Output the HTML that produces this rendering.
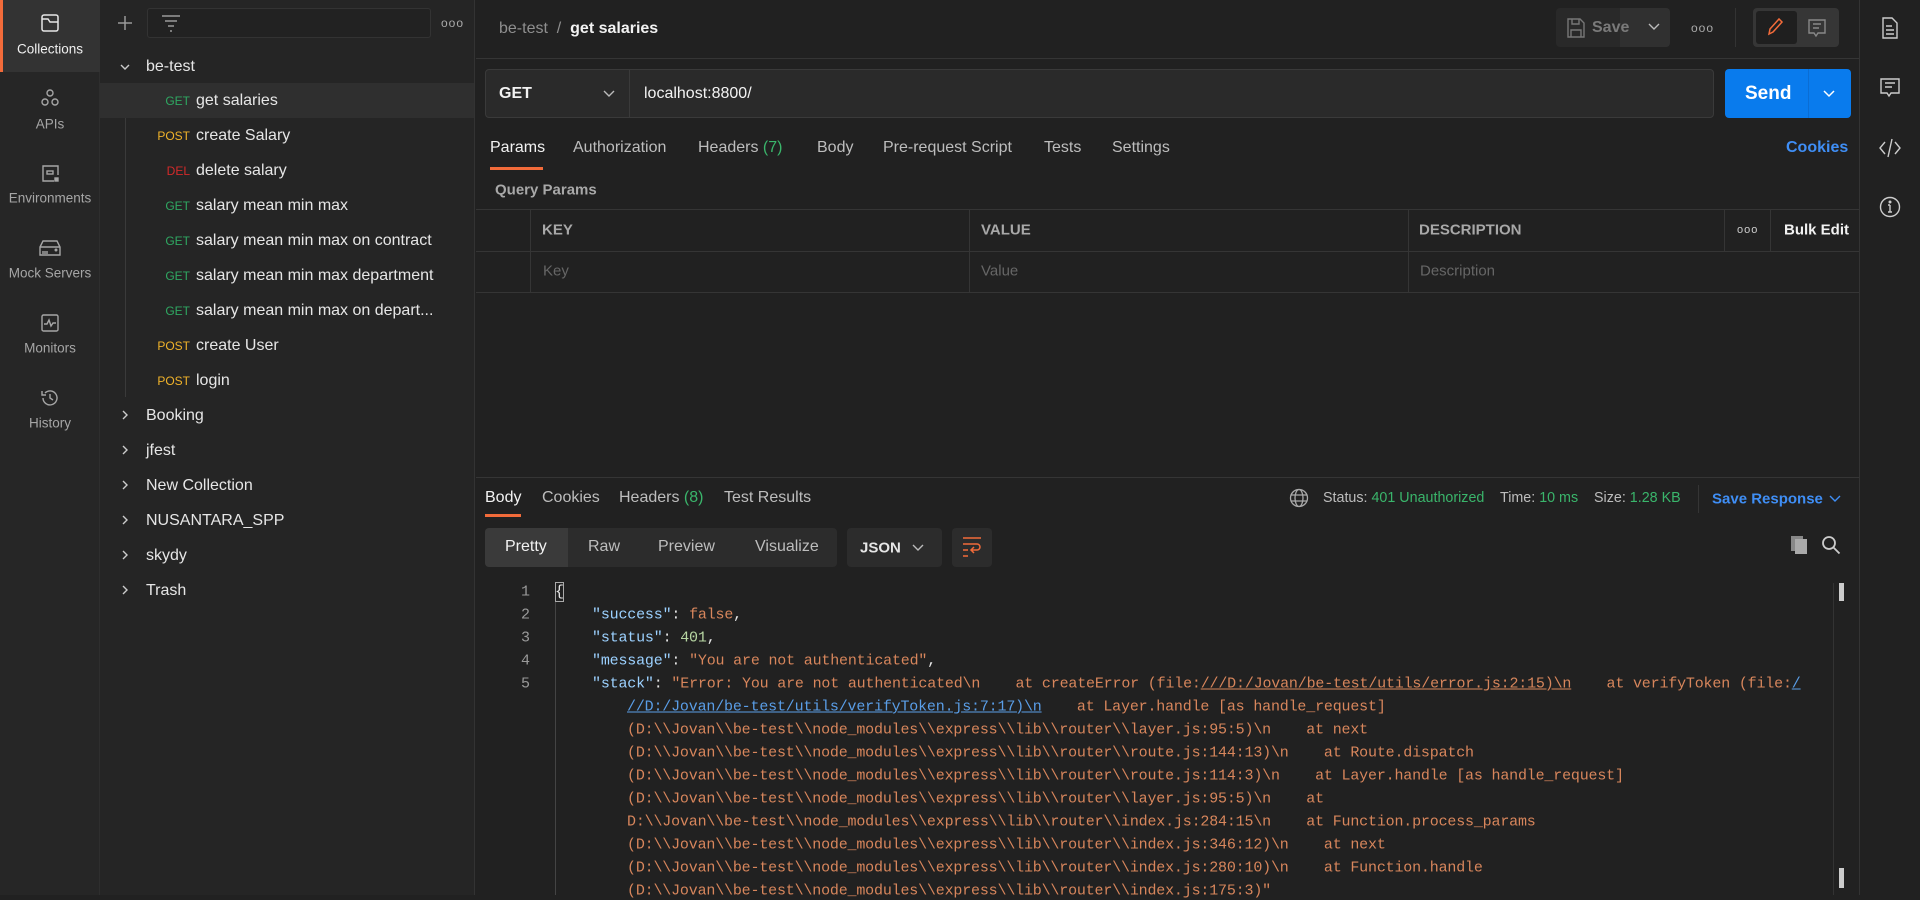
<!DOCTYPE html>
<html><head><meta charset="utf-8"><style>
*{margin:0;padding:0;box-sizing:border-box}
body{width:1920px;height:895px;overflow:hidden;background:#212121;font-family:"Liberation Sans",sans-serif;color:#e6e6e6;position:relative}
.a{position:absolute;white-space:pre}
.c{transform:translateY(-50%)}
.rail{position:absolute;left:0;top:0;width:100px;height:895px;background:#262626;border-right:1px solid #2e2e2e}
.side{position:absolute;left:100px;top:0;width:375px;height:895px;background:#252525;border-right:1px solid #333}
.rl{position:absolute;width:100px;text-align:center;font-size:13.5px;color:#a6a6a6}
.m{position:absolute;right:0;font-size:12px}
.row{position:absolute;left:0;width:374px;height:35px;font-size:16px;color:#e6e6e6}
.row .n{position:absolute;left:96px;top:50%;transform:translateY(-50%)}
.row .m{left:0;width:90px;text-align:right;top:50%;transform:translateY(-50%)}
.col{position:absolute;left:0;width:374px;height:35px;font-size:16px}
.col span{position:absolute;left:46px;top:50%;transform:translateY(-50%)}
.col svg{position:absolute;left:19px;top:11px}
.code{font-family:"Liberation Mono",monospace;font-size:15px;letter-spacing:-0.18px;color:#d8865c}
.k{color:#9cd1ff}.p{color:#e6e6e6}.g{color:#b8d7a3}
.u{text-decoration:underline}.b{color:#5a9ee8;text-decoration:underline}
.ln{position:absolute;left:500px;width:30px;text-align:right;font-family:"Liberation Mono",monospace;font-size:15px;color:#9a9a9a}
.tab{position:absolute;font-size:16px;color:#bdbdbd}
.hline{position:absolute;height:1px;background:#353535}
.vline{position:absolute;width:1px;background:#353535}
</style></head><body>

<div class="rail">
 <div style="position:absolute;left:0;top:0;width:100px;height:72px;background:#333"></div>
 <div style="position:absolute;left:0;top:0;width:3px;height:72px;background:#f26b3a"></div>
 <svg class="a" style="left:41px;top:14px" width="18" height="18" viewBox="0 0 18 18" fill="none" stroke="#e6e6e6" stroke-width="1.5"><rect x="1" y="1" width="16" height="16" rx="2"/><path d="M1 5h6l2 3h8"/></svg>
 <div class="rl c" style="top:49px;color:#f0f0f0">Collections</div>
 <svg class="a" style="left:40px;top:89px" width="20" height="18" viewBox="0 0 20 18" fill="none" stroke="#a6a6a6" stroke-width="1.4"><circle cx="10" cy="4" r="3"/><circle cx="5" cy="13" r="3"/><circle cx="15" cy="13" r="3"/></svg>
 <div class="rl c" style="top:124px">APIs</div>
 <svg class="a" style="left:41px;top:164px" width="19" height="19" viewBox="0 0 19 19" fill="none" stroke="#a6a6a6" stroke-width="1.4"><path d="M17 11V2H2v15h11"/><rect x="6" y="7" width="6" height="3"/><rect x="14" y="14" width="3" height="3" fill="#a6a6a6"/></svg>
 <div class="rl c" style="top:198px">Environments</div>
 <svg class="a" style="left:39px;top:240px" width="22" height="16" viewBox="0 0 22 16" fill="none" stroke="#a6a6a6" stroke-width="1.4"><path d="M1 7l3-6h14l3 6v8H1z M1 7h20"/><path d="M4 11v3M6 11v3M8 11v3"/><circle cx="17" cy="10" r="0.8" fill="#a6a6a6"/></svg>
 <div class="rl c" style="top:273px">Mock Servers</div>
 <svg class="a" style="left:41px;top:314px" width="18" height="18" viewBox="0 0 18 18" fill="none" stroke="#a6a6a6" stroke-width="1.4"><rect x="1" y="1" width="16" height="16" rx="1.5"/><path d="M3 10h3l2-4 2 6 2-3h3"/></svg>
 <div class="rl c" style="top:348px">Monitors</div>
 <svg class="a" style="left:40px;top:388px" width="20" height="20" viewBox="0 0 20 20" fill="none" stroke="#a6a6a6" stroke-width="1.4"><path d="M3 10a7 7 0 1 0 2-5M2 3v4h4"/><path d="M10 6v4l3 2"/></svg>
 <div class="rl c" style="top:423px">History</div>
</div>

<div class="side">
 <svg class="a" style="left:17px;top:15px" width="16" height="16" viewBox="0 0 16 16" stroke="#9a9a9a" stroke-width="1.5"><path d="M8 1v14M1 8h14"/></svg>
 <div style="position:absolute;left:47px;top:8px;width:284px;height:30px;border:1px solid #333;border-radius:3px;background:#222"></div>
 <svg class="a" style="left:61px;top:14px" width="20" height="18" viewBox="0 0 20 18" stroke="#9a9a9a" stroke-width="1.4"><path d="M1 2h18M4 7h12M7 12h6M9 17h2"/></svg>
 <div class="a c" style="left:341px;top:23px;font-size:12px;color:#aaa;letter-spacing:1px">ooo</div>
 <div class="col" style="top:49px"><svg width="12" height="12" viewBox="0 0 12 12" fill="none" stroke="#ccc" stroke-width="1.4" style="top:12px"><path d="M2 4l4 4 4-4"/></svg><span>be-test</span></div>
 <div style="position:absolute;left:25px;top:83px;width:1px;height:314px;background:#3a3a3a"></div>
 <div class="row" style="top:83px;background:#2f2f2f"><span class="m" style="color:#2fa862">GET</span><span class="n">get salaries</span></div>
 <div class="row" style="top:118px"><span class="m" style="color:#f1b32a">POST</span><span class="n">create Salary</span></div>
 <div class="row" style="top:153px"><span class="m" style="color:#d32a2a">DEL</span><span class="n">delete salary</span></div>
 <div class="row" style="top:188px"><span class="m" style="color:#2fa862">GET</span><span class="n">salary mean min max</span></div>
 <div class="row" style="top:223px"><span class="m" style="color:#2fa862">GET</span><span class="n">salary mean min max on contract</span></div>
 <div class="row" style="top:258px"><span class="m" style="color:#2fa862">GET</span><span class="n">salary mean min max department</span></div>
 <div class="row" style="top:293px"><span class="m" style="color:#2fa862">GET</span><span class="n">salary mean min max on depart...</span></div>
 <div class="row" style="top:328px"><span class="m" style="color:#f1b32a">POST</span><span class="n">create User</span></div>
 <div class="row" style="top:363px"><span class="m" style="color:#f1b32a">POST</span><span class="n">login</span></div>
 <div class="col" style="top:398px"><svg width="12" height="12" viewBox="0 0 12 12" fill="none" stroke="#ccc" stroke-width="1.4"><path d="M4 2l4 4-4 4"/></svg><span>Booking</span></div>
 <div class="col" style="top:433px"><svg width="12" height="12" viewBox="0 0 12 12" fill="none" stroke="#ccc" stroke-width="1.4"><path d="M4 2l4 4-4 4"/></svg><span>jfest</span></div>
 <div class="col" style="top:468px"><svg width="12" height="12" viewBox="0 0 12 12" fill="none" stroke="#ccc" stroke-width="1.4"><path d="M4 2l4 4-4 4"/></svg><span>New Collection</span></div>
 <div class="col" style="top:503px"><svg width="12" height="12" viewBox="0 0 12 12" fill="none" stroke="#ccc" stroke-width="1.4"><path d="M4 2l4 4-4 4"/></svg><span>NUSANTARA_SPP</span></div>
 <div class="col" style="top:538px"><svg width="12" height="12" viewBox="0 0 12 12" fill="none" stroke="#ccc" stroke-width="1.4"><path d="M4 2l4 4-4 4"/></svg><span>skydy</span></div>
 <div class="col" style="top:573px"><svg width="12" height="12" viewBox="0 0 12 12" fill="none" stroke="#ccc" stroke-width="1.4"><path d="M4 2l4 4-4 4"/></svg><span>Trash</span></div>
</div>

<div class="a c" style="left:499px;top:29px;font-size:16px;color:#8f8f8f">be-test  /  <span style="color:#f2f2f2;font-weight:bold">get salaries</span></div>
<div class="hline" style="left:476px;top:58px;width:1383px"></div>
<div style="position:absolute;left:1556px;top:8px;width:114px;height:39px;background:#292929;border-radius:4px"></div>
<div style="position:absolute;left:1620px;top:8px;width:50px;height:39px;background:#303030;border-radius:0 4px 4px 0"></div>
<svg class="a" style="left:1567px;top:18px" width="18" height="20" viewBox="0 0 18 20" fill="none" stroke="#777" stroke-width="1.4"><path d="M1 1h12l4 4v14H1z"/><path d="M5 1v5h7V1M4 19v-7h10v7"/></svg>
<div class="a c" style="left:1592px;top:28px;font-size:16px;color:#7a7a7a;font-weight:bold">Save</div>
<svg class="a" style="left:1648px;top:22px" width="12" height="10" viewBox="0 0 12 10" fill="none" stroke="#bbb" stroke-width="1.4"><path d="M1 2l5 5 5-5"/></svg>
<div class="a c" style="left:1691px;top:28px;font-size:12px;color:#aaa;letter-spacing:1px">ooo</div>
<div class="vline" style="left:1735px;top:8px;height:39px;background:#333"></div>
<div style="position:absolute;left:1753px;top:8px;width:86px;height:39px;background:#363636;border-radius:4px"></div>
<div style="position:absolute;left:1756px;top:11px;width:41px;height:33px;background:#1f1f1f;border-radius:3px"></div>
<svg class="a" style="left:1766px;top:17px" width="20" height="20" viewBox="0 0 20 20" fill="none" stroke="#f26b3a" stroke-width="1.5"><path d="M3 17l1-5 9-10 3 3-9 10z"/></svg>
<svg class="a" style="left:1807px;top:18px" width="20" height="20" viewBox="0 0 20 20" fill="none" stroke="#888" stroke-width="1.4"><path d="M2 2h16v13h-7l-2 3-2-3H2z M6 6h8M6 10h6"/></svg>

<div style="position:absolute;left:485px;top:69px;width:1229px;height:49px;background:#2a2a2a;border:1px solid #3a3a3a;border-radius:4px"></div>
<div class="vline" style="left:629px;top:70px;height:47px;background:#3a3a3a"></div>
<div class="a c" style="left:499px;top:94px;font-size:16px;font-weight:bold;color:#f2f2f2">GET</div>
<svg class="a" style="left:603px;top:89px" width="12" height="10" viewBox="0 0 12 10" fill="none" stroke="#bbb" stroke-width="1.4"><path d="M1 2l5 5 5-5"/></svg>
<div class="a c" style="left:644px;top:94px;font-size:16px;color:#f2f2f2">localhost:8800/</div>
<div style="position:absolute;left:1725px;top:69px;width:126px;height:49px;background:#097bed;border-radius:4px"></div>
<div class="vline" style="left:1808px;top:69px;height:49px;background:#0a6dd4"></div>
<div class="a c" style="left:1745px;top:94px;font-size:19px;font-weight:bold;color:#fff">Send</div>
<svg class="a" style="left:1823px;top:89px" width="12" height="10" viewBox="0 0 12 10" fill="none" stroke="#fff" stroke-width="1.5"><path d="M1 2l5 5 5-5"/></svg>

<div class="tab c" style="left:490px;top:148px;color:#f2f2f2">Params</div>
<div style="position:absolute;left:490px;top:167px;width:53px;height:3px;background:#f26b3a"></div>
<div class="tab c" style="left:573px;top:148px">Authorization</div>
<div class="tab c" style="left:698px;top:148px">Headers <span style="color:#3ab56b">(7)</span></div>
<div class="tab c" style="left:817px;top:148px">Body</div>
<div class="tab c" style="left:883px;top:148px">Pre-request Script</div>
<div class="tab c" style="left:1044px;top:148px">Tests</div>
<div class="tab c" style="left:1112px;top:148px">Settings</div>
<div class="a c" style="left:1786px;top:148px;font-size:16px;font-weight:bold;color:#3f8ef5">Cookies</div>
<div class="a c" style="left:495px;top:190px;font-size:15px;font-weight:bold;color:#a8a8a8">Query Params</div>

<div class="hline" style="left:476px;top:209px;width:1383px"></div>
<div class="hline" style="left:476px;top:251px;width:1383px"></div>
<div class="hline" style="left:476px;top:292px;width:1383px"></div>
<div class="vline" style="left:530px;top:210px;height:82px"></div>
<div class="vline" style="left:969px;top:210px;height:82px"></div>
<div class="vline" style="left:1408px;top:210px;height:82px"></div>
<div class="vline" style="left:1724px;top:210px;height:41px"></div>
<div class="vline" style="left:1770px;top:210px;height:41px"></div>
<div class="a c" style="left:542px;top:230px;font-size:15px;font-weight:bold;color:#a8a8a8">KEY</div>
<div class="a c" style="left:981px;top:230px;font-size:15px;font-weight:bold;color:#a8a8a8">VALUE</div>
<div class="a c" style="left:1419px;top:230px;font-size:15px;font-weight:bold;color:#a8a8a8">DESCRIPTION</div>
<div class="a c" style="left:1737px;top:230px;font-size:11px;color:#ccc;letter-spacing:1px">ooo</div>
<div class="a c" style="left:1784px;top:230px;font-size:15px;font-weight:bold;color:#f2f2f2">Bulk Edit</div>
<div class="a c" style="left:543px;top:271px;font-size:15px;color:#666">Key</div>
<div class="a c" style="left:981px;top:271px;font-size:15px;color:#666">Value</div>
<div class="a c" style="left:1420px;top:271px;font-size:15px;color:#666">Description</div>

<div class="hline" style="left:476px;top:477px;width:1383px"></div>
<div class="tab c" style="left:485px;top:498px;color:#f2f2f2">Body</div>
<div style="position:absolute;left:485px;top:514px;width:36px;height:3px;background:#f26b3a"></div>
<div class="tab c" style="left:542px;top:498px">Cookies</div>
<div class="tab c" style="left:619px;top:498px">Headers <span style="color:#3ab56b">(8)</span></div>
<div class="tab c" style="left:724px;top:498px">Test Results</div>
<svg class="a" style="left:1289px;top:488px" width="20" height="20" viewBox="0 0 20 20" fill="none" stroke="#aaa" stroke-width="1.3"><circle cx="10" cy="10" r="8.5"/><ellipse cx="10" cy="10" rx="4" ry="8.5"/><path d="M2 7h16M2 13h16"/></svg>
<div class="a c" style="left:1323px;top:498px;font-size:14.3px;color:#bdbdbd">Status: <span style="color:#3ab56b">401 Unauthorized</span>    Time: <span style="color:#3ab56b">10 ms</span>    Size: <span style="color:#3ab56b">1.28 KB</span></div>
<div class="vline" style="left:1698px;top:485px;height:28px"></div>
<div class="a c" style="left:1712px;top:499px;font-size:15px;font-weight:bold;color:#3f8ef5">Save Response</div>
<svg class="a" style="left:1829px;top:494px" width="12" height="10" viewBox="0 0 12 10" fill="none" stroke="#3f8ef5" stroke-width="1.4"><path d="M1 2l5 5 5-5"/></svg>

<div style="position:absolute;left:485px;top:528px;width:352px;height:39px;background:#2c2c2c;border-radius:4px"></div>
<div style="position:absolute;left:485px;top:528px;width:83px;height:39px;background:#3a3a3a;border-radius:4px 0 0 4px"></div>
<div class="a c" style="left:505px;top:547px;font-size:16px;color:#f2f2f2">Pretty</div>
<div class="a c" style="left:588px;top:547px;font-size:16px;color:#bdbdbd">Raw</div>
<div class="a c" style="left:658px;top:547px;font-size:16px;color:#bdbdbd">Preview</div>
<div class="a c" style="left:755px;top:547px;font-size:16px;color:#bdbdbd">Visualize</div>
<div style="position:absolute;left:847px;top:528px;width:95px;height:39px;background:#2c2c2c;border-radius:4px"></div>
<div class="a c" style="left:860px;top:548px;font-size:15px;font-weight:bold;color:#e6e6e6">JSON</div>
<svg class="a" style="left:912px;top:543px" width="12" height="10" viewBox="0 0 12 10" fill="none" stroke="#bbb" stroke-width="1.4"><path d="M1 2l5 5 5-5"/></svg>
<div style="position:absolute;left:952px;top:528px;width:40px;height:39px;background:#2c2c2c;border-radius:4px"></div>
<svg class="a" style="left:962px;top:536px" width="20" height="22" viewBox="0 0 20 22" fill="none" stroke="#f26b3a" stroke-width="1.5"><path d="M1 2h18M1 8h14a3 3 0 0 1 0 6h-5M12 11l-3 3 3 3M1 14h5M1 20h5"/></svg>
<svg class="a" style="left:1790px;top:535px" width="18" height="20" viewBox="0 0 18 20"><rect x="1" y="1" width="12" height="15" fill="#888"/><rect x="5" y="4" width="12" height="15" fill="#aaa"/></svg>
<svg class="a" style="left:1821px;top:535px" width="20" height="20" viewBox="0 0 20 20" fill="none" stroke="#ccc" stroke-width="1.8"><circle cx="8" cy="8" r="6"/><path d="M12.5 12.5l6 6"/></svg>

<div class="vline" style="left:555px;top:583px;height:312px;background:#444"></div>
<div class="ln c" style="top:592px">1</div>
<div class="ln c" style="top:615px">2</div>
<div class="ln c" style="top:638px">3</div>
<div class="ln c" style="top:661px">4</div>
<div class="ln c" style="top:684px">5</div>
<div style="position:absolute;left:555px;top:582px;width:9px;height:20px;border:1px solid #aaa"></div>
<div class="a c code p" style="left:555px;top:592px">{</div>
<div class="a c code" style="left:592px;top:615px"><span class="k">"success"</span><span class="p">: </span>false<span class="p">,</span></div>
<div class="a c code" style="left:592px;top:638px"><span class="k">"status"</span><span class="p">: </span><span class="g">401</span><span class="p">,</span></div>
<div class="a c code" style="left:592px;top:661px"><span class="k">"message"</span><span class="p">: </span>"You are not authenticated"<span class="p">,</span></div>
<div class="a c code" style="left:592px;top:684px"><span class="k">"stack"</span><span class="p">: </span>"Error: You are not authenticated\n    at createError (file:<span class="u">///D:/Jovan/be-test/utils/error.js:2:15)\n</span>    at verifyToken (file:<span class="b">/</span></div>
<div class="a c code" style="left:627px;top:707px"><span class="b">//D:/Jovan/be-test/utils/verifyToken.js:7:17)\n</span>    at Layer.handle [as handle_request]</div>
<div class="a c code" style="left:627px;top:730px">(D:\\Jovan\\be-test\\node_modules\\express\\lib\\router\\layer.js:95:5)\n    at next</div>
<div class="a c code" style="left:627px;top:753px">(D:\\Jovan\\be-test\\node_modules\\express\\lib\\router\\route.js:144:13)\n    at Route.dispatch</div>
<div class="a c code" style="left:627px;top:776px">(D:\\Jovan\\be-test\\node_modules\\express\\lib\\router\\route.js:114:3)\n    at Layer.handle [as handle_request]</div>
<div class="a c code" style="left:627px;top:799px">(D:\\Jovan\\be-test\\node_modules\\express\\lib\\router\\layer.js:95:5)\n    at</div>
<div class="a c code" style="left:627px;top:822px">D:\\Jovan\\be-test\\node_modules\\express\\lib\\router\\index.js:284:15\n    at Function.process_params</div>
<div class="a c code" style="left:627px;top:845px">(D:\\Jovan\\be-test\\node_modules\\express\\lib\\router\\index.js:346:12)\n    at next</div>
<div class="a c code" style="left:627px;top:868px">(D:\\Jovan\\be-test\\node_modules\\express\\lib\\router\\index.js:280:10)\n    at Function.handle</div>
<div class="a c code" style="left:627px;top:891px">(D:\\Jovan\\be-test\\node_modules\\express\\lib\\router\\index.js:175:3)"</div>
<div class="vline" style="left:1833px;top:583px;height:312px;background:#333"></div>
<div style="position:absolute;left:1839px;top:583px;width:5px;height:18px;background:#ccc"></div>
<div style="position:absolute;left:1839px;top:868px;width:5px;height:20px;background:#ccc"></div>

<div class="vline" style="left:1859px;top:0;height:895px;background:#333"></div>
<svg class="a" style="left:1882px;top:17px" width="16" height="22" viewBox="0 0 16 22" fill="none" stroke="#ccc" stroke-width="1.4"><path d="M1 1h9l5 5v15H1z M4 9h6M4 13h8M4 17h8"/></svg>
<svg class="a" style="left:1880px;top:78px" width="20" height="20" viewBox="0 0 20 20" fill="none" stroke="#ccc" stroke-width="1.4"><path d="M1 1h18v14h-8l-2 3-2-3H1z M5 5h10M5 9h7"/></svg>
<svg class="a" style="left:1879px;top:138px" width="22" height="20" viewBox="0 0 22 20" fill="none" stroke="#ccc" stroke-width="1.4"><path d="M6 4l-5 6 5 6M16 4l5 6-5 6M13 1l-4 18"/></svg>
<svg class="a" style="left:1879px;top:196px" width="22" height="22" viewBox="0 0 22 22" fill="none" stroke="#ccc" stroke-width="1.4"><circle cx="11" cy="11" r="9.5"/><path d="M11 9v7M9 16h4M9 9h2"/><circle cx="11" cy="6" r="0.8" fill="#ccc"/></svg>
</body></html>
